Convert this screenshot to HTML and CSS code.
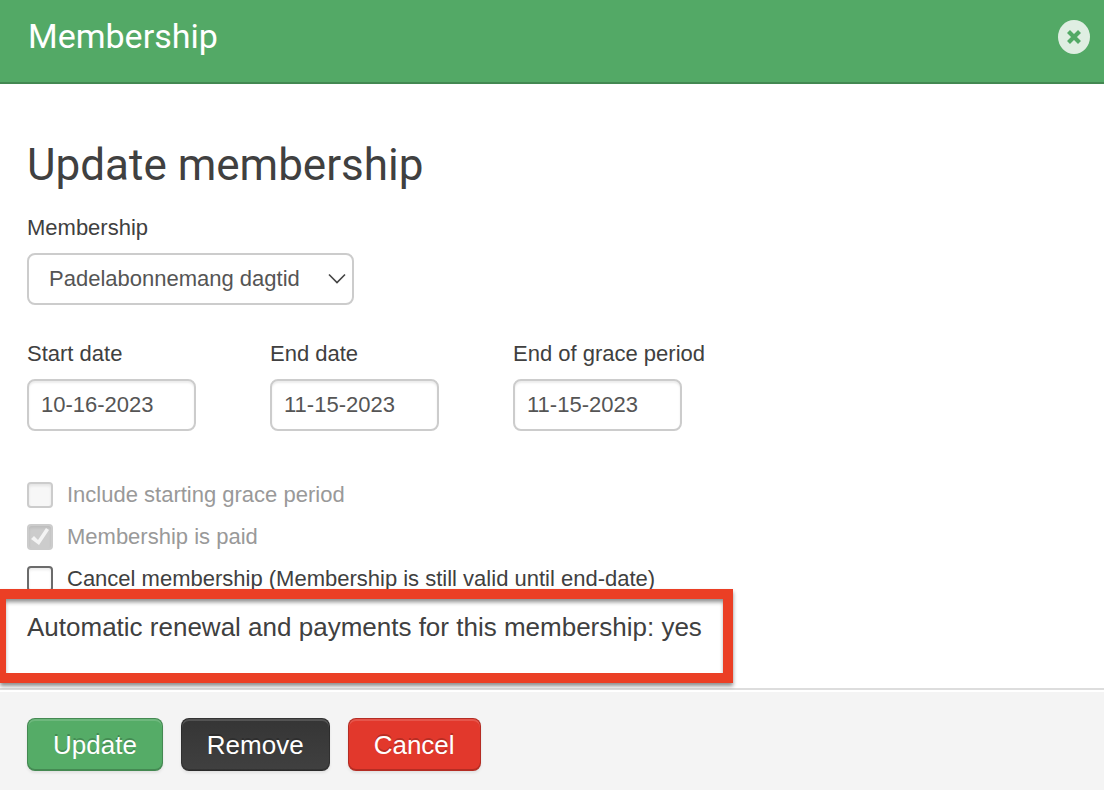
FILE: index.html
```
<!DOCTYPE html>
<html lang="en">
<head>
<meta charset="utf-8">
<meta name="viewport" content="width=device-width, initial-scale=1">
<title>Membership</title>

<link rel="stylesheet" href="styles.css">
</head>

<body>

<!-- HEADER -->
<header class="header">
  <h1>Membership</h1>
  <button class="close" type="button" aria-label="Close">
    <svg viewBox="0 0 32 34" width="32" height="34">
      <ellipse cx="16" cy="17" rx="16" ry="17" fill="#dfeee2"/>
      <path d="M10.5 11.5l11 11M21.5 11.5l-11 11" stroke="#53a966" stroke-width="4.2"/>
    </svg>
  </button>
</header>

<!-- FORM -->
<form class="content" id="membershipForm">
  <h2>Update membership</h2>

  <div class="field">
    <label for="membership">Membership</label>
    <select id="membership">
      <option>Padelabonnemang dagtid</option>
    </select>
  </div>

  <div class="dates">
    <div class="field">
      <label for="startDate">Start date</label>
      <input type="text" id="startDate" value="10-16-2023">
    </div>
    <div class="field">
      <label for="endDate">End date</label>
      <input type="text" id="endDate" value="11-15-2023">
    </div>
    <div class="field">
      <label for="graceDate">End of grace period</label>
      <input type="text" id="graceDate" value="11-15-2023">
    </div>
  </div>

  <div class="checks">
    <label class="check disabled"><input type="checkbox" disabled> Include starting grace period</label>
    <label class="check disabled"><input type="checkbox" checked disabled> Membership is paid</label>
    <label class="check"><input type="checkbox"> Cancel membership (Membership is still valid until end-date)</label>
  </div>

  <p class="renewal">Automatic renewal and payments for this membership: yes</p>
</form>

<!-- ACTIONS -->
<footer class="footer">
  <button class="btn btn-update" type="submit" form="membershipForm">Update</button>
  <button class="btn btn-remove" type="button">Remove</button>
  <button class="btn btn-cancel" type="button">Cancel</button>
</footer>

</body>
</html>
```
FILE: styles.css
```
* {box-sizing:border-box;}

body {
  margin:0; min-height:100vh;
  display:flex; flex-direction:column;
  font-family:"Liberation Sans", Arial, sans-serif;
  font-size:22px; line-height:28px;
  background:white; color:#404040;
}

h1, h2 {margin:0; font-family:Roboto, sans-serif; font-weight:400;}

.header {
  display:flex; justify-content:space-between; align-items:flex-start;
  padding:16px 14px 26px 28px;
  background:#53a966; color:white;
  border-bottom:2px solid #438852;
}
.header h1 {font-size:34px; line-height:40px;}

.close {
  display:flex; margin-top:4px; padding:0;
  border:none; background:none; cursor:pointer;
}

.content {flex:1; padding:53px 27px 32px;}
.content h2 {font-size:44px; line-height:56px; margin-bottom:21px;}

.field {display:flex; flex-direction:column; align-items:flex-start; gap:11px;}
.field label {white-space:nowrap;}

select, input[type="text"] {
  height:52px;
  border:2px solid #ccc; border-radius:8px;
  font:inherit; color:#555; background-color:white;
}
select {
  appearance:none; width:327px; padding:0 48px 0 20px;
  background-image:url("data:image/svg+xml,%3Csvg xmlns='http://www.w3.org/2000/svg' width='18' height='12' fill='none' stroke='%23444' stroke-width='1.6'%3E%3Cpath d='M1 1.5l8 8 8-8'/%3E%3C/svg%3E");
  background-repeat:no-repeat; background-position:right 6px center;
}
input[type="text"] {
  width:169px; padding:0 12px;
  box-shadow:inset 0 2px 2px rgba(0,0,0,0.08);
}

.dates {display:flex; margin-top:35px;}
.dates .field {width:243px;}

.checks {margin-top:43px;}
.check {display:flex; align-items:center; gap:14px; min-height:42px;}
.check input {
  appearance:none; flex:none;
  width:26px; height:26px; margin:0;
  border:2px solid #6b6b6b; border-radius:4px;
  background:white;
  box-shadow:inset 0 2px 3px rgba(0,0,0,0.08);
}
.disabled {color:#999;}
.disabled input {border-color:#ccc; background:#f7f7f7;}
.disabled input:checked {background:#ccc;}
.check input:checked::before {
  content:""; display:block; width:22px; height:22px;
  background:#f4f4f4;
  clip-path:polygon(2px 13px, 5px 10px, 9px 14px, 17px 2px, 20px 4px, 10px 19px);
}

.renewal {
  position:relative; width:fit-content;
  margin:0; font-size:26px; line-height:54px;
}
/* red marker frame around the renewal line */
.renewal::after {
  content:""; position:absolute;
  top:-11px; right:-31px; bottom:-29px; left:-27px;
  border:10px solid #eb3f25; border-left-width:6px;
  box-shadow:0 3px 4px rgba(0,0,0,0.45), inset 0 4px 4px -1px rgba(0,0,0,0.45);
  pointer-events:none;
}

.footer {
  display:flex; gap:18px;
  padding:28px 27px 19px;
  background:#f4f4f4;
  border-top:2px solid #ddd;
  box-shadow:inset 0 2px 0 white;
}

.btn {
  height:53px; padding:0 25px;
  border:1px solid rgba(0,0,0,0.2); border-radius:8px;
  font:inherit; font-size:26px; color:white;
  text-shadow:0 -2px 0 rgba(0,0,0,0.2);
  box-shadow:inset 0 2px 0 rgba(255,255,255,0.15), inset 0 -1px 0 rgba(0,0,0,0.2), 0 2px 3px rgba(0,0,0,0.08);
  cursor:pointer;
}
.btn-update {background:#55ac67;}
.btn-remove {background:linear-gradient(#353535,#404040);}
.btn-cancel {background:#e2382c;}
```
